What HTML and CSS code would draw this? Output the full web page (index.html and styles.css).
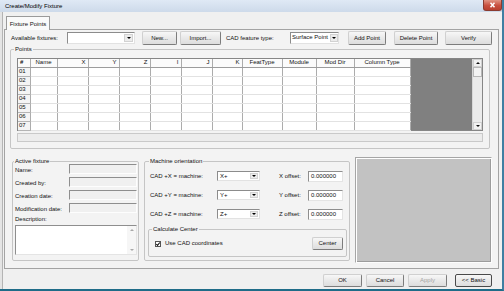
FILE: index.html
```html
<!DOCTYPE html>
<html>
<head>
    <link rel="stylesheet" href="styles.css">
</head>
<body>
<div class="window">
    <div class="titlebar">
        <span class="title">Create/Modify Fixture</span>
        <span class="close">
            <svg width="9" height="6" viewBox="0 0 9 6"><path d="M2.5 0.8 L6.5 5.2 M6.5 0.8 L2.5 5.2" stroke="#fff" stroke-width="1.5"/></svg>
        </span>
    </div>
    <div class="client">
        <div class="tabs"><div class="tab">Fixture Points</div></div>
        <div class="panel">
            <div class="toolbar">
                <span class="fixtures-label">Available fixtures:</span>
                <div class="combo fixtures-combo"><span class="combo-value"></span><span class="combo-arrow"></span></div>
                <button class="btn btn-new">New...</button>
                <button class="btn btn-import">Import...</button>
                <span class="feature-label">CAD feature type:</span>
                <div class="combo feature-combo"><span class="combo-value">Surface Point</span><span class="combo-arrow"></span></div>
                <button class="btn btn-add">Add Point</button>
                <button class="btn btn-delete">Delete Point</button>
                <button class="btn btn-verify">Verify</button>
            </div>

            <fieldset class="group points">
                <legend>Points</legend>
                <div class="grid">
                    <table class="points-table">
                        <colgroup>
                            <col style="width:12px"><col style="width:27px"><col style="width:31px"><col style="width:31px">
                            <col style="width:31px"><col style="width:31px"><col style="width:31px"><col style="width:30px">
                            <col style="width:40px"><col style="width:34px"><col style="width:38px"><col style="width:56px">
                        </colgroup>
                        <thead>
                            <tr>
                                <th class="hash">#</th><th>Name</th><th class="num">X</th><th class="num">Y</th>
                                <th class="num">Z</th><th class="num">I</th><th class="num">J</th><th class="num">K</th>
                                <th>FeatType</th><th>Module</th><th>Mod Dir</th><th>Column Type</th>
                            </tr>
                        </thead>
                        <tbody>
                            <tr><td class="rowno">01</td><td></td><td></td><td></td><td></td><td></td><td></td><td></td><td></td><td></td><td></td><td></td></tr>
                            <tr><td class="rowno">02</td><td></td><td></td><td></td><td></td><td></td><td></td><td></td><td></td><td></td><td></td><td></td></tr>
                            <tr><td class="rowno">03</td><td></td><td></td><td></td><td></td><td></td><td></td><td></td><td></td><td></td><td></td><td></td></tr>
                            <tr><td class="rowno">04</td><td></td><td></td><td></td><td></td><td></td><td></td><td></td><td></td><td></td><td></td><td></td></tr>
                            <tr><td class="rowno">05</td><td></td><td></td><td></td><td></td><td></td><td></td><td></td><td></td><td></td><td></td><td></td></tr>
                            <tr><td class="rowno">06</td><td></td><td></td><td></td><td></td><td></td><td></td><td></td><td></td><td></td><td></td><td></td></tr>
                            <tr><td class="rowno">07</td><td></td><td></td><td></td><td></td><td></td><td></td><td></td><td></td><td></td><td></td><td></td></tr>
                        </tbody>
                    </table>
                    <div class="grid-fill"></div>
                    <div class="vscroll">
                        <div class="sb-btn"><span class="arrow-up"></span></div>
                        <div class="sb-thumb"></div>
                        <div class="sb-track"></div>
                        <div class="sb-btn"><span class="arrow-down"></span></div>
                    </div>
                </div>
                <div class="hbar"></div>
            </fieldset>

            <div class="lower">
                <fieldset class="group active">
                    <legend>Active fixture</legend>
                    <div class="field-rows">
                        <div class="field-row"><span class="field-label">Name:</span><span class="field"></span></div>
                        <div class="field-row"><span class="field-label">Created by:</span><span class="field"></span></div>
                        <div class="field-row"><span class="field-label">Creation date:</span><span class="field"></span></div>
                        <div class="field-row"><span class="field-label">Modification date:</span><span class="field"></span></div>
                    </div>
                    <div class="desc-label">Description:</div>
                    <div class="textarea">
                        <div class="ta-body"></div>
                        <div class="ta-scroll"><span class="arrow-up dim"></span><span class="arrow-down dim"></span></div>
                    </div>
                </fieldset>

                <fieldset class="group orient">
                    <legend>Machine orientation</legend>
                    <div class="orient-rows">
                        <div class="orient-row">
                            <span class="orient-label">CAD +X = machine:</span>
                            <div class="combo axis-combo"><span class="combo-value">X+</span><span class="combo-arrow"></span></div>
                            <span class="offset-label">X offset:</span>
                            <span class="textbox">0.000000</span>
                        </div>
                        <div class="orient-row">
                            <span class="orient-label">CAD +Y = machine:</span>
                            <div class="combo axis-combo"><span class="combo-value">Y+</span><span class="combo-arrow"></span></div>
                            <span class="offset-label">Y offset:</span>
                            <span class="textbox">0.000000</span>
                        </div>
                        <div class="orient-row">
                            <span class="orient-label">CAD +Z = machine:</span>
                            <div class="combo axis-combo"><span class="combo-value">Z+</span><span class="combo-arrow"></span></div>
                            <span class="offset-label">Z offset:</span>
                            <span class="textbox">0.000000</span>
                        </div>
                    </div>
                    <fieldset class="group calc">
                        <legend>Calculate Center</legend>
                        <div class="calc-row">
                            <svg class="checkbox" width="6" height="6" viewBox="0 0 6 6">
                                <rect x="0.5" y="0.5" width="5" height="5" fill="#fff" stroke="#555"/>
                                <path d="M1.3 3 L2.5 4.3 L4.8 1.5" fill="none" stroke="#111" stroke-width="1.1"/>
                            </svg>
                            <span class="check-label">Use CAD coordinates</span>
                            <button class="btn btn-center">Center</button>
                        </div>
                    </fieldset>
                </fieldset>

                <div class="preview"></div>
            </div>
        </div>

        <div class="footer">
            <button class="btn btn-ok">OK</button>
            <button class="btn btn-cancel">Cancel</button>
            <button class="btn btn-apply" disabled>Apply</button>
            <button class="btn btn-basic">&lt;&lt; Basic</button>
        </div>
    </div>
</div>
</body>
</html>
```

FILE: styles.css
```css
* {
    box-sizing: border-box;
}

body {
    margin: 0;
    background: #f0f0f0;
    font-family: "Liberation Sans", Arial, sans-serif;
    font-size: 6px;
    line-height: 7px;
    color: #111;
}

.window {
    width: 504px;
    height: 291px;
    display: flex;
    flex-direction: column;
    background: #f0f0f0;
    border-right: 2px solid #3f7fa2;
    border-bottom: 2px solid #1f6c88;
    overflow: hidden;
}

/* title bar */
.titlebar {
    height: 12px;
    flex: none;
    display: flex;
    align-items: flex-start;
    padding-left: 5px;
    background: linear-gradient(#dfe9f5, #cddaea);
}

.title {
    flex: 1;
    padding-top: 3px;
    color: #000;
}

.close {
    width: 19px;
    height: 11px;
    display: flex;
    align-items: center;
    justify-content: center;
    background: linear-gradient(#e19483, #c8503f 55%, #b9402f);
    border: 1px solid #8a3b30;
    border-top: none;
    border-radius: 0 0 3px 3px;
}

/* client area */
.client {
    flex: 1;
    display: flex;
    flex-direction: column;
    padding: 0 3px 0 4px;
    box-shadow: inset 2px 0 0 #e4e4e4, inset 3px 0 0 #b4b4b4;
}

.tabs {
    height: 17px;
    flex: none;
    display: flex;
    align-items: flex-end;
    padding-left: 2px;
}

.tab {
    width: 44px;
    height: 14px;
    margin-bottom: -1px;
    padding-top: 4px;
    text-align: center;
    background: #fafafa;
    border: 1px solid #9a9a9a;
    border-bottom: none;
    position: relative;
    z-index: 1;
}

.panel {
    width: 495px;
    height: 240px;
    flex: none;
    border: 1px solid #a3a3a3;
    background: #f3f3f3;
}

/* buttons, combos, fields */
.btn {
    height: 14px;
    padding: 0;
    font: inherit;
    color: #111;
    background: linear-gradient(#f7f7f7, #e9e9e9 50%, #dddddd);
    border: 1px solid;
    border-color: #d0d0d0 #7c7c7c #7c7c7c #d0d0d0;
    border-radius: 2px;
    flex: none;
}

.btn[disabled] {
    color: #a4a4a4;
}

.combo {
    height: 12px;
    display: flex;
    flex: none;
    background: #fff;
    border: 1px solid;
    border-color: #8c8c8c #e2e2e2 #e2e2e2 #8c8c8c;
}

.combo-value {
    flex: 1;
    padding-left: 2px;
    line-height: 9px;
    white-space: nowrap;
    overflow: hidden;
}

.combo-arrow {
    width: 9px;
    flex: none;
    margin: 1px;
    background: #ececec;
    border: 1px solid #d2d2d2;
    display: flex;
    align-items: center;
    justify-content: center;
}

.combo-arrow::after {
    content: "";
    border-left: 2px solid transparent;
    border-right: 2px solid transparent;
    border-top: 2px solid #000;
}

.toolbar {
    height: 14px;
    margin-top: 1px;
    padding-left: 6px;
    display: flex;
    align-items: center;
}

.fixtures-label {
    width: 56px;
    flex: none;
}

.fixtures-combo {
    width: 68px;
}

.btn-new {
    width: 35px;
    margin-left: 7px;
}

.btn-import {
    width: 41px;
    margin-left: 3px;
}

.feature-label {
    width: 64px;
    margin-left: 5px;
    flex: none;
}

.feature-combo {
    width: 49px;
}

.feature-combo .combo-value {
    padding-left: 1px;
    overflow: visible;
}

.feature-combo .combo-arrow {
    width: 8px;
    margin: 1px 0 1px 0;
}

.btn-add {
    width: 38px;
    margin-left: 9px;
}

.btn-delete {
    width: 44px;
    margin-left: 8px;
}

.btn-verify {
    width: 47px;
    margin-left: 7px;
}

/* group boxes */
.group {
    margin: 0;
    min-width: 0;
    border: 1px solid #c5c5c5;
    border-radius: 2px;
}

.group legend {
    padding: 0 1px;
    line-height: 7px;
}

.points {
    width: 480px;
    height: 103px;
    margin: 1px 0 0 5px;
    padding: 5px 6px 0 6px;
}

.points legend {
    margin-left: -3px;
}

/* data grid */
.grid {
    height: 73px;
    display: flex;
    border: 1px solid #868686;
    background: #fff;
}

.points-table {
    width: 392px;
    flex: none;
    table-layout: fixed;
    border-collapse: collapse;
    align-self: flex-start;
}

.points-table tr {
    height: 9px;
}

.points-table thead tr {
    height: 8px;
}

.points-table th,
.points-table td {
    padding: 0 2px;
    font-weight: normal;
    line-height: 7px;
    border-right: 1px solid #acacac;
    border-bottom: 1px solid #e2e2e2;
    white-space: nowrap;
    overflow: hidden;
}

.points-table th {
    text-align: center;
    background: #fbfbfb;
    border-bottom: 1px solid #9c9c9c;
}

.points-table th.num {
    text-align: right;
}

.points-table th.hash {
    text-align: left;
    font-weight: bold;
}

.points-table td.rowno {
    padding-left: 1px;
    background: #f4f4f4;
    border-bottom: 1px solid #b4b4b4;
}

.grid-fill {
    flex: 1;
    background: #808080;
}

.vscroll {
    width: 10px;
    flex: none;
    display: flex;
    flex-direction: column;
    background: #ebebeb;
    border-left: 1px solid #d8d8d8;
}

.sb-btn {
    height: 8px;
    display: flex;
    align-items: center;
    justify-content: center;
    background: #f2f2f2;
    border: 1px solid #d0d0d0;
}

.sb-thumb {
    height: 10px;
    background: #f4f4f4;
    border: 1px solid #b8b8b8;
}

.sb-track {
    flex: 1;
}

.arrow-up {
    border-left: 2px solid transparent;
    border-right: 2px solid transparent;
    border-bottom: 2px solid #111;
}

.arrow-down {
    border-left: 2px solid transparent;
    border-right: 2px solid transparent;
    border-top: 2px solid #111;
}

.arrow-up.dim {
    border-bottom-color: #a8a8a8;
}

.arrow-down.dim {
    border-top-color: #a8a8a8;
}

.hbar {
    height: 9px;
    margin-top: 2px;
    background: #ececec;
    border: 1px solid #c9c9c9;
}

/* lower section */
.lower {
    margin-top: 8px;
    padding-left: 7px;
    display: flex;
    align-items: flex-start;
}

.active {
    width: 127px;
    height: 103px;
    margin-top: 1px;
    padding: 0 1px 0 2px;
}

.active legend {
    margin-left: -1px;
}

.field-rows {
    margin-top: -1px;
    display: flex;
    flex-direction: column;
    gap: 3px;
}

.field-row {
    height: 10px;
    display: flex;
    align-items: center;
}

.field-label {
    flex: 1;
    padding-top: 2px;
}

.field {
    width: 68px;
    height: 10px;
    background: #f0f0f0;
    border: 1px solid;
    border-color: #8e8e8e #fdfdfd #fdfdfd #8e8e8e;
}

.desc-label {
    margin-top: 3px;
}

.textarea {
    width: 122px;
    height: 30px;
    margin-top: 2px;
    display: flex;
    background: #fff;
    border: 1px solid;
    border-color: #8e8e8e #e4e4e4 #e4e4e4 #8e8e8e;
}

.ta-body {
    flex: 1;
}

.ta-scroll {
    width: 9px;
    padding: 3px 0 3px;
    display: flex;
    flex-direction: column;
    align-items: center;
    justify-content: space-between;
    background: #f6f6f6;
}

.orient {
    width: 206px;
    height: 103px;
    margin: 1px 0 0 5px;
    padding: 0 2px 0 3px;
}

.orient legend {
    margin-left: 1px;
}

.orient-rows {
    margin-top: 6px;
    display: flex;
    flex-direction: column;
    gap: 9px;
}

.orient-row {
    height: 10px;
    padding-left: 2px;
    display: flex;
    align-items: center;
}

.orient-label {
    width: 67px;
    flex: none;
}

.axis-combo {
    width: 43px;
    height: 10px;
}

.axis-combo .combo-value {
    line-height: 8px;
}

.axis-combo .combo-arrow {
    width: 8px;
}

.offset-label {
    width: 29px;
    margin-left: 19px;
    flex: none;
}

.textbox {
    width: 35px;
    height: 11px;
    padding-left: 2px;
    line-height: 9px;
    background: #fff;
    border: 1px solid;
    border-color: #8e8e8e #e4e4e4 #e4e4e4 #8e8e8e;
}

.calc {
    height: 31px;
    margin-top: 7px;
    padding: 4px 3px 0 6px;
}

.calc legend {
    margin-left: -3px;
}

.calc-row {
    height: 13px;
    display: flex;
    align-items: center;
}

.checkbox {
    flex: none;
}

.check-label {
    margin-left: 4px;
}

.btn-center {
    width: 31px;
    height: 13px;
    margin-left: auto;
}

.preview {
    width: 137px;
    height: 106px;
    margin-left: 5px;
    background: #c2c2c2;
    border: 1px solid;
    border-color: #a6a6a6 #fdfdfd #fdfdfd #a6a6a6;
    box-shadow: inset 1px 1px 0 #fff, inset -1px -1px 0 #9c9c9c;
}

/* dialog buttons */
.footer {
    margin-top: 5px;
    padding-right: 7px;
    display: flex;
    justify-content: flex-end;
    gap: 4px;
}

.footer .btn {
    height: 13px;
}

.btn-ok {
    width: 39px;
}

.btn-cancel {
    width: 38px;
}

.btn-apply {
    width: 39px;
}

.btn-basic {
    width: 37px;
    margin-left: 4px;
    border-color: #4a4a4a;
}
```
